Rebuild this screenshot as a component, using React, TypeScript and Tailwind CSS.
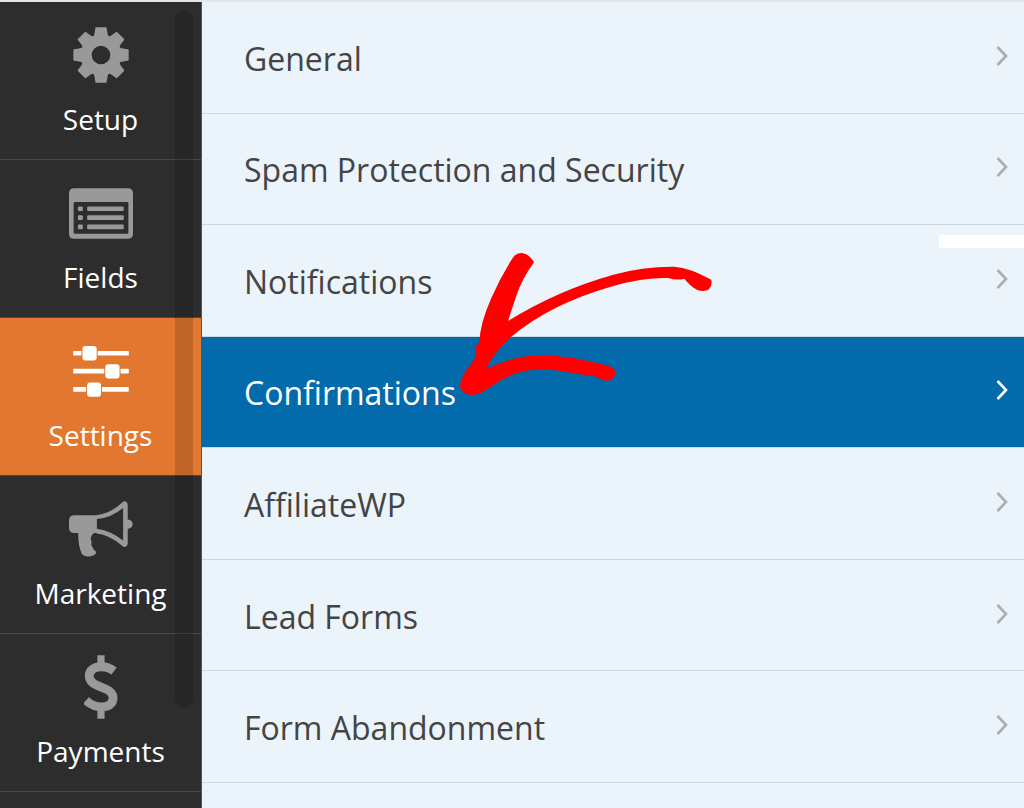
import type { ReactNode } from "react";

type NavItem = { label: string; icon: ReactNode; active?: boolean };

const TOOTH_ANGLES = [0, 45, 90, 135, 180, 225, 270, 315];

function GearIcon() {
  return (
    <svg viewBox="-84 -84 168 168" className="h-14 w-14" fill="currentColor" aria-hidden="true">
      <circle r="44" fill="none" stroke="currentColor" strokeWidth="32" />
      {TOOTH_ANGLES.map((angle) => (
        <path
          key={angle}
          d="M-15 -83H15Q17 -83 17 -80L20 -62Q21 -57 25 -54L0 -34L-25 -54Q-21 -57 -20 -62L-17 -80Q-17 -83 -15 -83Z"
          transform={`rotate(${angle})`}
        />
      ))}
    </svg>
  );
}

function FieldsIcon() {
  return (
    <svg viewBox="0 0 194 153" className="h-[51px] w-16" fill="currentColor" aria-hidden="true">
      <path
        fillRule="evenodd"
        d="M16 0H178Q194 0 194 16V137Q194 153 178 153H16Q0 153 0 137V16Q0 0 16 0ZM18 42Q14 42 14 46V134Q14 138 18 138H176Q180 138 180 134V46Q180 42 176 42Z"
      />
      {[55, 82, 110].map((y) => (
        <g key={y}>
          <rect x="27" y={y} width="15" height="14" rx="3" />
          <rect x="55" y={y} width="111" height="14" rx="3" />
        </g>
      ))}
    </svg>
  );
}

function SlidersIcon() {
  return (
    <svg viewBox="0 0 168 154" className="h-[51px] w-14" fill="currentColor" aria-hidden="true">
      <rect x="0" y="15" width="25" height="14" rx="2" />
      <rect x="28" y="0" width="43" height="44" rx="9" />
      <rect x="74" y="15" width="94" height="14" rx="2" />
      <rect x="0" y="69" width="94" height="14" rx="2" />
      <rect x="97" y="55" width="43" height="43" rx="9" />
      <rect x="143" y="69" width="25" height="14" rx="2" />
      <rect x="0" y="124" width="39" height="14" rx="2" />
      <rect x="42" y="110" width="42" height="43" rx="9" />
      <rect x="87" y="124" width="81" height="14" rx="2" />
    </svg>
  );
}

function MegaphoneIcon() {
  return (
    <svg viewBox="0 0 194 168" className="h-14 w-16" fill="currentColor" aria-hidden="true">
      <path d="M17 42H84V96H76Q66 103 66 116L69 124Q65 130 70 137Q74 147 83 154Q81 165 62 167Q45 169 39 160Q27 132 28 96H17Q0 96 0 80V58Q0 42 17 42Z" />
      <path
        fillRule="evenodd"
        d="M82 42Q128 36 161 4Q168 -3 175 3Q178 6 178 12V55Q193 57 193 69Q193 81 178 84V128Q178 135 172 138Q166 140 161 135Q125 103 82 97ZM84 54V83Q129 90 164 119V20Q129 50 84 54Z"
      />
    </svg>
  );
}

function DollarIcon() {
  return (
    <svg viewBox="0 0 104 194" className="h-16 w-[34px]" fill="none" stroke="currentColor" aria-hidden="true">
      <path d="M52 0V34M52 160V194" strokeWidth="22" />
      <path
        d="M92 48C80 39 68 35 54 35C30 35 16 46 16 63C16 78 25 86 42 93L66 103C81 109 89 117 89 130C89 148 76 158 54 158C34 158 20 151 6 138"
        strokeWidth="27"
      />
    </svg>
  );
}

function Chevron() {
  return (
    <svg viewBox="0 0 12 20" className="mb-1.5 h-5 w-3 shrink-0" fill="none" stroke="currentColor" strokeWidth="2.6" aria-hidden="true">
      <path d="M1.5 1L10 10L1.5 19" />
    </svg>
  );
}

const navItems: NavItem[] = [
  { label: "Setup", icon: <GearIcon /> },
  { label: "Fields", icon: <FieldsIcon /> },
  { label: "Settings", icon: <SlidersIcon />, active: true },
  { label: "Marketing", icon: <MegaphoneIcon /> },
  { label: "Payments", icon: <DollarIcon /> },
];

const sections = [
  "General",
  "Spam Protection and Security",
  "Notifications",
  "Confirmations",
  "AffiliateWP",
  "Lead Forms",
  "Form Abandonment",
];

function Sidebar() {
  return (
    <nav aria-label="Form builder" className="relative w-[202px] shrink-0 border-r border-[#555] bg-[#2d2d2d]">
      {navItems.map(({ label, icon, active }) => (
        <a
          key={label}
          href={`#${label.toLowerCase()}`}
          aria-current={active ? "page" : undefined}
          className={`flex h-[158px] flex-col items-center border-b border-[#484848] ${
            active ? "bg-[#e27730] text-white" : "text-[#999]"
          }`}
        >
          <span className="mt-[21px] flex h-16 items-center">{icon}</span>
          <span className="mt-3 text-[28px] leading-10 text-white">{label}</span>
        </a>
      ))}
      <div className="absolute top-2 right-2 h-[698px] w-[18px] rounded-full bg-black/15" />
    </nav>
  );
}

function ArrowMark() {
  return (
    <svg
      viewBox="0 0 870 510"
      className="pointer-events-none absolute top-[238px] left-[238px] h-[170px] w-[290px]"
      fill="#ff0000"
      aria-hidden="true"
    >
      <path d="M218 54Q228 38 246 39Q269 43 282 67Q246 116 228 170L204 243Q350 152 520 104Q610 79 704 80Q748 83 814 119Q817 139 807 148Q791 157 771 149Q751 139 733 116Q711 122 684 114Q610 112 520 138Q330 192 213 291Q160 338 138 388Q210 349 299 346Q380 348 445 363L504 377Q528 385 527 402Q517 425 499 422Q477 416 459 407Q441 408 419 403Q350 389 307 388Q225 388 157 437Q122 464 93 465Q63 461 60 438Q62 415 83 385Q104 360 109 342Q102 320 118 307Q120 250 154 174Q180 114 218 54Z" />
    </svg>
  );
}

export default function App() {
  return (
    <div className="flex h-screen flex-col overflow-hidden border-t-2 border-[#e4e7ea] bg-[#ebf3fb] font-['Open_Sans','Noto_Sans',sans-serif]">
      <div className="flex min-h-0 flex-1">
        <Sidebar />
        <main className="relative min-w-0 flex-1">
          <div className="grid h-[781px] grid-rows-7">
            {sections.map((label) => {
              const active = label === "Confirmations";
              return (
                <button
                  key={label}
                  type="button"
                  className={`flex items-center justify-between border-b border-[#ced7e0] pt-[3px] pr-4 pl-[42px] text-left ${
                    active ? "bg-[#036aab] text-white" : "text-[#aaaeb2]"
                  }`}
                >
                  <span className={`text-[32px] leading-10 ${active ? "text-white" : "text-[#444]"}`}>{label}</span>
                  <Chevron />
                </button>
              );
            })}
          </div>
          <div className="absolute top-[233px] right-0 h-[13px] w-[85px] bg-white" />
          <ArrowMark />
        </main>
      </div>
    </div>
  );
}
